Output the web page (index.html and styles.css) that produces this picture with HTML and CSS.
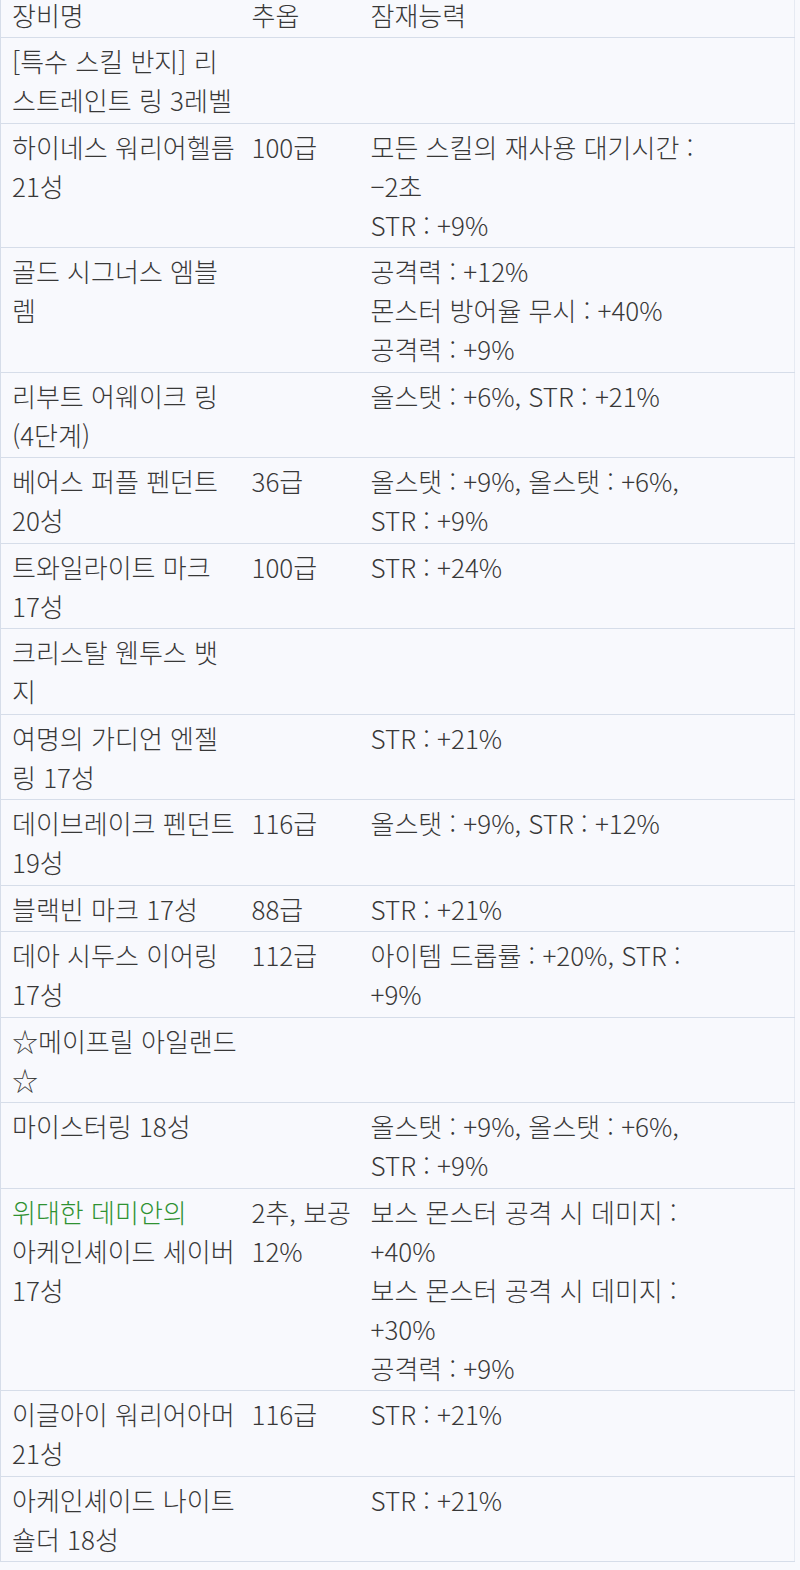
FILE: index.html
```html
<!DOCTYPE html>
<html lang="ko">
<head>
<meta charset="utf-8">
<link rel="stylesheet" href="styles.css">
</head>
<body>
<table class="equip">
  <colgroup>
    <col class="c-name">
    <col class="c-add">
    <col class="c-pot">
  </colgroup>
  <thead>
    <tr><th class="name">장비명</th><th>추옵</th><th class="pot">잠재능력</th></tr>
  </thead>
  <tbody>
    <tr><td class="name">[특수 스킬 반지] 리스트레인트 링 3레벨</td><td></td><td class="pot"></td></tr>
    <tr><td class="name">하이네스 워리어헬름 21성</td><td>100급</td><td class="pot">모든 스킬의 재사용 대기시간 : −2초<br>STR : +9%</td></tr>
    <tr><td class="name">골드 시그너스 엠블렘</td><td></td><td class="pot">공격력 : +12%<br>몬스터 방어율 무시 : +40%<br>공격력 : +9%</td></tr>
    <tr><td class="name">리부트 어웨이크 링 (4단계)</td><td></td><td class="pot">올스탯 : +6%, STR : +21%</td></tr>
    <tr><td class="name">베어스 퍼플 펜던트 20성</td><td>36급</td><td class="pot">올스탯 : +9%, 올스탯 : +6%, STR : +9%</td></tr>
    <tr><td class="name">트와일라이트 마크 17성</td><td>100급</td><td class="pot">STR : +24%</td></tr>
    <tr><td class="name">크리스탈 웬투스 뱃지</td><td></td><td class="pot"></td></tr>
    <tr><td class="name">여명의 가디언 엔젤링 17성</td><td></td><td class="pot">STR : +21%</td></tr>
    <tr><td class="name">데이브레이크 펜던트 19성</td><td>116급</td><td class="pot">올스탯 : +9%, STR : +12%</td></tr>
    <tr><td class="name">블랙빈 마크 17성</td><td>88급</td><td class="pot">STR : +21%</td></tr>
    <tr><td class="name">데아 시두스 이어링 17성</td><td>112급</td><td class="pot">아이템 드롭률 : +20%, STR : +9%</td></tr>
    <tr><td class="name">☆메이프릴 아일랜드 ☆</td><td></td><td class="pot"></td></tr>
    <tr><td class="name">마이스터링 18성</td><td></td><td class="pot">올스탯 : +9%, 올스탯 : +6%, STR : +9%</td></tr>
    <tr><td class="name"><span class="great">위대한 데미안의</span><br>아케인셰이드 세이버 17성</td><td>2추, 보공 12%</td><td class="pot">보스 몬스터 공격 시 데미지 : +40%<br>보스 몬스터 공격 시 데미지 : +30%<br>공격력 : +9%</td></tr>
    <tr><td class="name">이글아이 워리어아머 21성</td><td>116급</td><td class="pot">STR : +21%</td></tr>
    <tr><td class="name">아케인셰이드 나이트 숄더 18성</td><td></td><td class="pot">STR : +21%</td></tr>
  </tbody>
</table>
</body>
</html>
```

FILE: styles.css
```css
html, body {
  margin: 0;
  padding: 0;
  background: #f8f9fd;
}

body {
  font-family: "Noto Sans CJK KR", "Noto Sans", sans-serif;
  font-size: 26px;
  line-height: 39px;
  color: #383838;
}

.equip {
  border-collapse: collapse;
  table-layout: fixed;
  width: 795px;
  margin-top: -8.5px;
  border-left: 1px solid #d6dde9;
  border-right: 1px solid #e6eaf2;
}

.c-name { width: 240px; }
.c-add { width: 119px; }

.equip th,
.equip td {
  font-weight: 300;
  text-align: left;
  vertical-align: top;
  padding: 3.25px 4px 3.25px 11px;
  border-bottom: 1px solid #d6dde9;
}

.equip .name {
  padding-right: 0;
}

.equip .pot {
  padding-right: 78px;
}

.great {
  color: #2f9232;
}
```
